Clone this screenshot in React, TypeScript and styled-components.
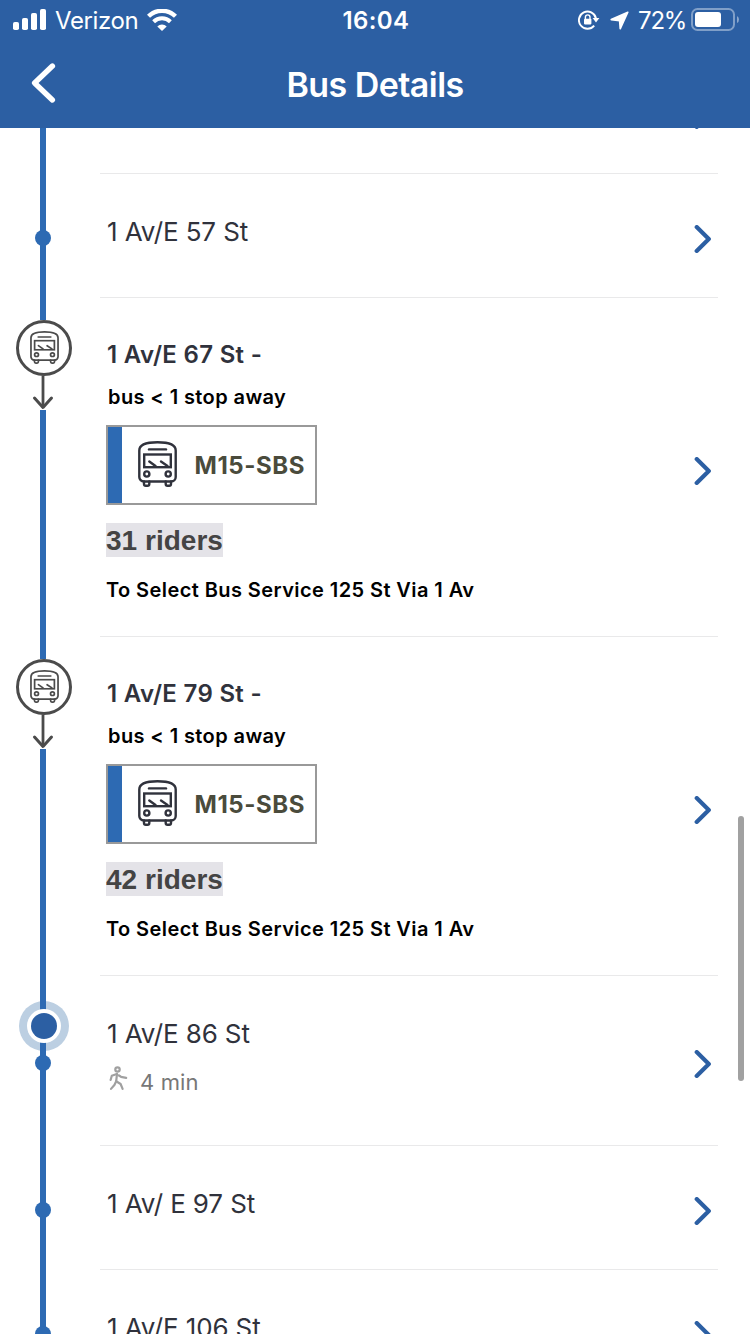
import React from "react";
import styled, { createGlobalStyle } from "styled-components";

const GlobalStyle = createGlobalStyle`
  * { box-sizing: border-box; }
  body {
    margin: 0;
    background: #fff;
    font-family: Inter, "Liberation Sans", sans-serif;
  }
  svg { display: block; flex: none; }
`;

const Screen = styled.div`
  position: relative;
  display: flex;
  flex-direction: column;
  width: 750px;
  height: 1334px;
  overflow: hidden;
  background: #fff;
`;

const StatusBar = styled.div`
  display: grid;
  grid-template-columns: 1fr auto 1fr;
  align-items: center;
  height: 40px;
  padding: 0 11px 0 13px;
  background: #2c5fa3;
  color: #fff;
  font-size: 24px;
  line-height: 38px;
  white-space: nowrap;
`;

const StatusGroup = styled.div<{ $end?: boolean }>`
  display: flex;
  align-items: center;
  justify-content: ${(p) => (p.$end ? "flex-end" : "flex-start")};
`;

const Carrier = styled.span`
  margin: 0 9px 0 9px;
  padding-top: 2px;
  letter-spacing: -0.4px;
`;

const Clock = styled.span`
  padding-top: 2px;
  font-weight: 600;
  letter-spacing: 0.4px;
`;

const Percent = styled.span`
  margin: 0 5px 0 9px;
  padding-top: 2px;
  letter-spacing: -1.3px;
`;

const Header = styled.header`
  display: grid;
  grid-template-columns: 100px 1fr 100px;
  align-items: center;
  height: 88px;
  background: #2c5fa3;
  color: #fff;
`;

const BackButton = styled.button`
  display: flex;
  padding: 0 0 2px 30px;
  border: 0;
  background: none;
  color: #fff;
`;

const Title = styled.h1`
  margin: 0;
  padding-top: 1px;
  font-size: 34px;
  line-height: 87px;
  font-weight: 600;
  letter-spacing: -0.55px;
  text-align: center;
`;

const StopList = styled.div`
  flex: 1;
  min-height: 0;
  overflow: hidden;
`;

const StopRow = styled.div<{ $height: number; $scrolled?: number }>`
  display: grid;
  grid-template-columns: 100px 618px;
  height: ${(p) => p.$height}px;
  margin-top: ${(p) => -(p.$scrolled ?? 0)}px;
`;

const Rail = styled.div`
  display: flex;
  flex-direction: column;
`;

const Track = styled.div<{ $length?: number }>`
  flex: ${(p) => (p.$length ? `0 0 ${p.$length}px` : "1")};
  width: 6px;
  margin-left: 40px;
  background: #2d6ab3;
`;

const StopDot = styled.div`
  flex: none;
  width: 16px;
  height: 16px;
  margin: -2px 0 -2px 35px;
  border-radius: 50%;
  background: #2d6ab3;
`;

const Marker = styled.div<{ $left: number }>`
  margin-left: ${(p) => p.$left}px;
`;

const StopBody = styled.div`
  display: flex;
  justify-content: space-between;
  padding: 0 6px;
  border-bottom: 1px solid #e9e9ea;
`;

const StopInfo = styled.div`
  display: flex;
  flex-direction: column;
  align-items: flex-start;
  white-space: nowrap;
`;

const StopName = styled.div<{ $active?: boolean }>`
  margin: ${(p) => (p.$active ? 41 : 42)}px 0 0 1px;
  font-size: ${(p) => (p.$active ? 24 : 26)}px;
  line-height: 32px;
  font-weight: ${(p) => (p.$active ? 600 : 400)};
  letter-spacing: ${(p) => (p.$active ? 0.3 : -0.12)}px;
  color: #30323c;
`;

const Distance = styled.div`
  margin: 13px 0 0 2px;
  font-size: 20px;
  line-height: 26px;
  font-weight: 600;
  letter-spacing: 0.4px;
  color: #000;
`;

const RouteBadge = styled.div`
  display: flex;
  align-items: center;
  width: 211px;
  height: 80px;
  margin-top: 15px;
  border: 2px solid #999;
`;

const RouteStripe = styled.div`
  width: 14px;
  align-self: stretch;
  margin-right: 16px;
  background: #2d6ab3;
`;

const RouteName = styled.span`
  margin-left: 17.5px;
  padding-top: 1px;
  font-size: 24px;
  font-weight: 700;
  letter-spacing: 0.55px;
  color: #4a4b3c;
`;

const Riders = styled.div`
  height: 34px;
  margin-top: 18px;
  background: #e4e3e8;
  color: #444;
  font: bold 28px/36px "Liberation Sans", Arial, sans-serif;
  letter-spacing: 0.02px;
`;

const Destination = styled.div`
  margin: 20px 0 0;
  font-size: 20px;
  line-height: 26px;
  font-weight: 600;
  letter-spacing: 0.42px;
  color: #000;
`;

const Walk = styled.div`
  display: flex;
  align-items: flex-start;
  margin-top: 16px;
  gap: 12px;
  font-size: 22px;
  line-height: 32px;
  color: #777;
`;

const WalkTime = styled.span`
  letter-spacing: 0.15px;
`;

const ChevronSlot = styled.div<{ $top: number }>`
  padding-top: ${(p) => p.$top}px;
`;

const ScrollThumb = styled.div`
  position: absolute;
  top: 816px;
  right: 6px;
  width: 6px;
  height: 265px;
  border-radius: 3px;
  background: #a1a1a1;
`;

function Signal() {
  return (
    <svg width="33" height="22" viewBox="0 0 33 22" fill="#fff">
      <rect x="0" y="13" width="6" height="8" rx="1.8" />
      <rect x="9" y="9" width="6" height="12" rx="1.8" />
      <rect x="18" y="4" width="6" height="17" rx="1.8" />
      <rect x="27" y="0" width="6" height="21" rx="1.8" />
    </svg>
  );
}

function Wifi() {
  return (
    <svg width="30" height="22" viewBox="0 0 30 22" fill="none" stroke="#fff">
      <path d="M1.500 7.300A19.300 19.300 0 0 1 28.500 7.300" strokeWidth="4.400" />
      <path d="M6.600 12.700A12 12 0 0 1 23.400 12.700" strokeWidth="4" />
      <path d="M15 22L10.300 17.400A6.600 6.600 0 0 1 19.700 17.400Z" fill="#fff" stroke="none" />
    </svg>
  );
}

function RotationLock() {
  return (
    <svg width="22" height="20" viewBox="0 0 22 20" fill="none" stroke="#fff">
      <path d="M16.200 15.600A8.600 8.600 0 1 1 17.900 8.200" strokeWidth="1.900" />
      <path d="M14.600 8h6.800L18 12.600Z" fill="#fff" stroke="none" />
      <rect x="6" y="8.800" width="7.400" height="5.600" rx="0.800" fill="#fff" stroke="none" />
      <path d="M7.400 9V7.200a2.300 2.300 0 0 1 4.600 0V9" strokeWidth="1.400" />
    </svg>
  );
}

function LocationArrow() {
  return (
    <svg width="19" height="19" viewBox="0 0 19 19">
      <path
        d="M17.800 1.200L1.200 8.600L9.600 9.600L10.200 17.800Z"
        fill="#fff"
        stroke="#fff"
        strokeWidth="1.600"
        strokeLinejoin="round"
      />
    </svg>
  );
}

function Battery() {
  return (
    <svg width="48" height="24" viewBox="0 0 48 24" fill="none">
      <rect x="1" y="1" width="42" height="21" rx="5.500" stroke="#fff" strokeOpacity="0.400" strokeWidth="2" />
      <rect x="4" y="4" width="26" height="15" rx="3" fill="#fff" />
      <path d="M46 8q2 1 2 3.500t-2 3.500z" fill="#fff" fillOpacity="0.450" />
    </svg>
  );
}

function BackIcon() {
  return (
    <svg width="27" height="42" viewBox="0 0 27 42" fill="none">
      <path
        d="M22.400 4L4.600 21L22.400 38"
        stroke="#fff"
        strokeWidth="5.400"
        strokeLinecap="round"
        strokeLinejoin="round"
      />
    </svg>
  );
}

function Chevron() {
  return (
    <svg width="18" height="28" viewBox="0 0 18 28" fill="none">
      <path
        d="M2.700 2.100L14.800 14L2.700 25.900"
        stroke="#2c5fa3"
        strokeWidth="4.200"
        strokeLinecap="round"
        strokeLinejoin="round"
      />
    </svg>
  );
}

function BusShapes({ ink, weight }: { ink: string; weight: number }) {
  return (
    <g fill="none" stroke={ink} strokeWidth={weight} strokeLinejoin="round" strokeLinecap="round">
      <path d="M1.300 9.500C1.300 3.200 9 1.300 19.500 1.300S37.700 3.200 37.700 9.500V36A4.500 4.500 0 0 1 33.200 40.500H5.800A4.500 4.500 0 0 1 1.300 36Z" />
      <path d="M11 8.400H28" />
      <rect x="6.200" y="13.500" width="26.600" height="12.700" strokeLinejoin="miter" />
      <path d="M11.300 20.500L17.500 25M23 20.500L29.500 25" />
      <circle cx="8.800" cy="33" r="2.600" />
      <circle cx="30.200" cy="33" r="2.600" />
      <path d="M6 40.500V43a1.800 1.800 0 0 0 1.800 1.800h1.700A1.800 1.800 0 0 0 11.300 43V40.500M27.700 40.500V43a1.800 1.800 0 0 0 1.800 1.800h1.700A1.800 1.800 0 0 0 33 43V40.500" />
    </g>
  );
}

function BusIcon() {
  return (
    <svg width="39" height="48" viewBox="0 0 39 48">
      <BusShapes ink="#30323c" weight={2.4} />
    </svg>
  );
}

function BusMarker() {
  return (
    <svg width="56" height="90" viewBox="0 0 56 90" fill="none">
      <circle cx="28" cy="28" r="26.500" fill="#fff" stroke="#4b4b4b" strokeWidth="3" />
      <svg x="14" y="11" width="29" height="33" viewBox="0 0 39 46" preserveAspectRatio="none">
        <BusShapes ink="#4b4b4b" weight={2.3} />
      </svg>
      <path d="M27 55.500V87" stroke="#4b4b4b" strokeWidth="2.800" />
      <path
        d="M18.500 78L27 87.500L35.500 78"
        stroke="#4b4b4b"
        strokeWidth="3"
        strokeLinecap="round"
        strokeLinejoin="round"
      />
    </svg>
  );
}

function CurrentMarker() {
  return (
    <svg width="50" height="50" viewBox="0 0 50 50">
      <circle cx="25" cy="25" r="25" fill="#bccfe2" />
      <rect x="21" y="0" width="6" height="50" fill="#2d6ab3" />
      <circle cx="25" cy="25" r="17" fill="#fff" />
      <circle cx="25" cy="25" r="13" fill="#2c5fa3" />
    </svg>
  );
}

function WalkIcon() {
  return (
    <svg
      width="22"
      height="26"
      viewBox="0 0 22 26"
      fill="none"
      stroke="#a0a0a0"
      strokeWidth="2.200"
      strokeLinecap="round"
      strokeLinejoin="round"
    >
      <circle cx="11.500" cy="3.500" r="2.200" />
      <path d="M10.800 8L5.800 9.800L4.600 14" />
      <path d="M11 8L10.200 15.200L14.600 18L16.600 22.900" />
      <path d="M10.200 15.200L8.400 19L5 22.900" />
      <path d="M12.600 9.300L15 10.800L20.200 11.800" />
    </svg>
  );
}

type StopProps = {
  name?: string;
  height: number;
  chevronTop: number;
  scrolled?: number;
  riders?: number;
  walk?: string;
};

function Stop({ name, height, chevronTop, scrolled, riders, walk }: StopProps) {
  const active = riders !== undefined;
  return (
    <StopRow $height={height} $scrolled={scrolled}>
      <Rail>
        {active && (
          <>
            <Track $length={22} />
            <Marker $left={16}>
              <BusMarker />
            </Marker>
          </>
        )}
        {walk && (
          <>
            <Track $length={25} />
            <Marker $left={19}>
              <CurrentMarker />
            </Marker>
            <Track $length={6} />
            <StopDot />
          </>
        )}
        {!active && !walk && (
          <>
            <Track $length={58} />
            <StopDot />
          </>
        )}
        <Track />
      </Rail>
      <StopBody>
        <StopInfo>
          <StopName $active={active}>{name}</StopName>
          {active && (
            <>
              <Distance>bus &lt; 1 stop away</Distance>
              <RouteBadge>
                <RouteStripe />
                <BusIcon />
                <RouteName>M15-SBS</RouteName>
              </RouteBadge>
              <Riders>{riders} riders</Riders>
              <Destination>To Select Bus Service 125 St Via 1 Av</Destination>
            </>
          )}
          {walk && (
            <Walk>
              <WalkIcon />
              <WalkTime>{walk}</WalkTime>
            </Walk>
          )}
        </StopInfo>
        <ChevronSlot $top={chevronTop}>
          <Chevron />
        </ChevronSlot>
      </StopBody>
    </StopRow>
  );
}

export default function App() {
  return (
    <>
      <GlobalStyle />
      <Screen>
        <StatusBar>
          <StatusGroup>
            <Signal />
            <Carrier>Verizon</Carrier>
            <Wifi />
          </StatusGroup>
          <Clock>16:04</Clock>
          <StatusGroup $end>
            <RotationLock />
            <Marker $left={10}>
              <LocationArrow />
            </Marker>
            <Percent>72%</Percent>
            <Battery />
          </StatusGroup>
        </StatusBar>
        <Header>
          <BackButton aria-label="Back">
            <BackIcon />
          </BackButton>
          <Title>Bus Details</Title>
        </Header>
        <StopList>
          <Stop height={124} chevronTop={51} scrolled={78} />
          <Stop name="1 Av/E 57 St" height={124} chevronTop={51} />
          <Stop name="1 Av/E 67 St -" height={339} chevronTop={159} riders={31} />
          <Stop name="1 Av/E 79 St -" height={339} chevronTop={159} riders={42} />
          <Stop name="1 Av/E 86 St" height={170} chevronTop={74} walk="4 min" />
          <Stop name="1 Av/ E 97 St" height={124} chevronTop={51} />
          <Stop name="1 Av/E 106 St" height={124} chevronTop={51} />
        </StopList>
        <ScrollThumb />
      </Screen>
    </>
  );
}
